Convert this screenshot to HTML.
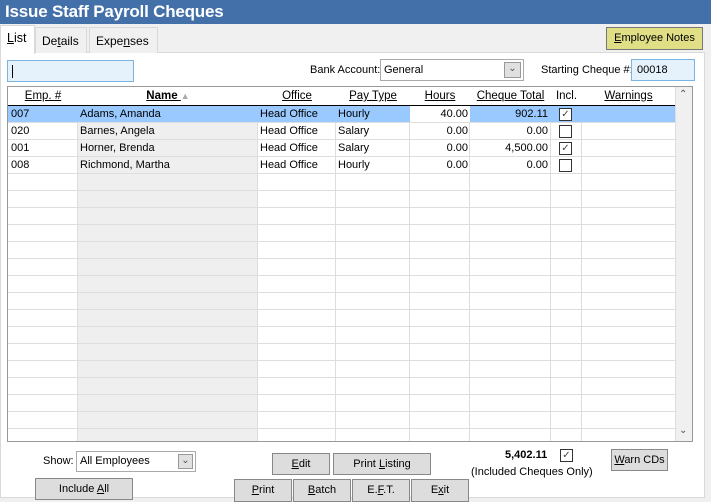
<!DOCTYPE html><html><head><style>
*{box-sizing:border-box;margin:0;padding:0}
body{width:711px;height:502px;background:#f0f0f0;font:11px "Liberation Sans",sans-serif;position:relative;overflow:hidden;color:#000}
.a{position:absolute}
.title{left:0;top:0;width:711px;height:24px;background:#4470aa;color:#fff;font-weight:bold;font-size:17px;padding:2px 5px;letter-spacing:-0.2px}
.panel{left:0;top:52px;width:705px;height:446px;background:#fff;border:1px solid #d9d9d9}
.tab{top:27px;height:26px;background:#f0f0f0;border:1px solid #d9d9d9;border-bottom:none;font-size:12px;padding:6px 6px}
.btn{background:#ddd;border:1px solid #888;text-align:center;font-size:11px;line-height:20px}
.cell{position:absolute;font-size:11px;white-space:nowrap;line-height:17px}
.cb{position:absolute;width:13px;height:13px;border:1px solid #333;background:#fff;color:#444;font-size:10px;line-height:11px;text-align:center}
.h{position:absolute;top:89px;text-align:center;text-decoration:underline;font-size:11.5px;line-height:14px}
</style></head><body>
<div class="a title">Issue Staff Payroll Cheques</div>
<div class="a panel"></div>
<div class="a tab" style="left:0;top:25px;height:29px;width:35px;background:#fff;padding:5px 6px;font-size:12.5px"><u>L</u>ist</div>
<div class="a tab" style="left:35px;width:52px">De<u>t</u>ails</div>
<div class="a tab" style="left:89px;width:69px">Expe<u>n</u>ses</div>
<div class="a" style="left:606px;top:27px;width:97px;height:23px;background:#e0df86;border:1px solid #777;font-size:11px;text-align:center;line-height:21px"><u>E</u>mployee Notes</div>
<div class="a" style="left:7px;top:60px;width:127px;height:22px;background:#e5f1fb;border:1px solid #7ab3e4"><div class="a" style="left:4px;top:4px;width:1px;height:13px;background:#000"></div></div>
<div class="a" style="left:310px;top:64px;font-size:11px">Bank Account:</div>
<div class="a" style="left:380px;top:59px;width:144px;height:22px;border:1px solid #aaa;background:#fff;font-size:11px;padding:4px 3px">General<div class="a" style="right:2px;top:2px;width:17px;height:16px;background:#e0e0e0;border:1px solid #999;text-align:center;line-height:12px;font-size:10px;color:#555">&#8964;</div></div>
<div class="a" style="left:541px;top:64px;font-size:11px">Starting Cheque #:</div>
<div class="a" style="left:631px;top:59px;width:64px;height:22px;background:#e5f1fb;border:1px solid #7ab3e4;font-size:11px;padding:4px 5px">00018</div>
<div class="a" style="left:7px;top:86px;width:686px;height:356px;border:1px solid #999;background:#fff;overflow:hidden">
 <div class="a" style="left:70px;top:0;width:180px;height:356px;background:#efefef"></div>
 <div class="a" style="left:0;top:19px;width:667px;height:338px;background:repeating-linear-gradient(to bottom,transparent 0,transparent 16px,#dedede 16px,#dedede 17px)"></div>
 <div class="a" style="left:0;top:0;width:667px;height:356px;background:linear-gradient(to right,transparent 69px,#dedede 69px,#dedede 70px,transparent 70px,transparent 249px,#dedede 249px,#dedede 250px,transparent 250px,transparent 327px,#dedede 327px,#dedede 328px,transparent 328px,transparent 401px,#dedede 401px,#dedede 402px,transparent 402px,transparent 461px,#dedede 461px,#dedede 462px,transparent 462px,transparent 542px,#dedede 542px,#dedede 543px,transparent 543px,transparent 573px,#dedede 573px,#dedede 574px,transparent 574px)"></div>
 <div class="a" style="left:0;top:0;width:667px;height:19px;background:#fff;border-bottom:1px solid #000"></div>
 <div class="a" style="left:0;top:19px;width:667px;height:16px;background:#99c9ff"></div>
 <div class="a" style="left:402px;top:19px;width:60px;height:16px;background:#fff"></div>
 <div class="a" style="left:667px;top:0;width:17px;height:356px;background:#f0f0f0;border-left:1px solid #ddd"></div>
 <div class="a" style="left:671px;top:2px;font-size:10px;color:#555">&#8963;</div>
 <div class="a" style="left:671px;top:338px;font-size:10px;color:#555">&#8964;</div>
</div>
<div class="h" style="left:8px;width:70px">Emp. #</div>
<div class="h" style="left:78px;width:180px;font-weight:bold">Name <span style="color:#aaa;font-size:9px;text-decoration:none;display:inline-block">&#9650;</span></div>
<div class="h" style="left:258px;width:78px">Office</div>
<div class="h" style="left:336px;width:74px">Pay Type</div>
<div class="h" style="left:410px;width:60px">Hours</div>
<div class="h" style="left:470px;width:81px">Cheque Total</div>
<div class="h" style="left:551px;width:31px;text-decoration:none">Incl.</div>
<div class="h" style="left:582px;width:93px">Warnings</div>
<div class="a" style="left:0;top:106px">
<div class="cell" style="left:11px;top:0">007</div><div class="cell" style="left:80px;top:0">Adams, Amanda</div><div class="cell" style="left:260px;top:0">Head Office</div><div class="cell" style="left:338px;top:0">Hourly</div><div class="cell" style="left:410px;width:58px;text-align:right;top:0">40.00</div><div class="cell" style="left:470px;width:78px;text-align:right;top:0">902.11</div>
<div class="cell" style="left:11px;top:17px">020</div><div class="cell" style="left:80px;top:17px">Barnes, Angela</div><div class="cell" style="left:260px;top:17px">Head Office</div><div class="cell" style="left:338px;top:17px">Salary</div><div class="cell" style="left:410px;width:58px;text-align:right;top:17px">0.00</div><div class="cell" style="left:470px;width:78px;text-align:right;top:17px">0.00</div>
<div class="cell" style="left:11px;top:34px">001</div><div class="cell" style="left:80px;top:34px">Horner, Brenda</div><div class="cell" style="left:260px;top:34px">Head Office</div><div class="cell" style="left:338px;top:34px">Salary</div><div class="cell" style="left:410px;width:58px;text-align:right;top:34px">0.00</div><div class="cell" style="left:470px;width:78px;text-align:right;top:34px">4,500.00</div>
<div class="cell" style="left:11px;top:51px">008</div><div class="cell" style="left:80px;top:51px">Richmond, Martha</div><div class="cell" style="left:260px;top:51px">Head Office</div><div class="cell" style="left:338px;top:51px">Hourly</div><div class="cell" style="left:410px;width:58px;text-align:right;top:51px">0.00</div><div class="cell" style="left:470px;width:78px;text-align:right;top:51px">0.00</div>
<div class="cb" style="left:559px;top:2px">&#10003;</div>
<div class="cb" style="left:559px;top:19px"></div>
<div class="cb" style="left:559px;top:36px">&#10003;</div>
<div class="cb" style="left:559px;top:53px"></div>
</div>
<div class="a" style="left:43px;top:455px;font-size:11px">Show:</div>
<div class="a" style="left:76px;top:451px;width:120px;height:21px;border:1px solid #aaa;background:#fff;font-size:11px;padding:3px 3px">All Employees<div class="a" style="right:2px;top:2px;width:15px;height:15px;background:#e0e0e0;border:1px solid #999;text-align:center;line-height:11px;font-size:10px;color:#555">&#8964;</div></div>
<div class="a btn" style="left:35px;top:478px;width:98px;height:22px">Include <u>A</u>ll</div>
<div class="a btn" style="left:272px;top:453px;width:58px;height:22px"><u>E</u>dit</div>
<div class="a btn" style="left:333px;top:453px;width:98px;height:22px">Print <u>L</u>isting</div>
<div class="a btn" style="left:234px;top:479px;width:58px;height:23px"><u>P</u>rint</div>
<div class="a btn" style="left:293px;top:479px;width:58px;height:23px"><u>B</u>atch</div>
<div class="a btn" style="left:352px;top:479px;width:58px;height:23px">E.<u>F</u>.T.</div>
<div class="a btn" style="left:411px;top:479px;width:58px;height:23px">E<u>x</u>it</div>
<div class="a" style="left:505px;top:449px;font-size:11px;font-weight:bold">5,402.11</div>
<div class="cb" style="left:560px;top:449px">&#10003;</div>
<div class="a" style="left:471px;top:466px;font-size:11px">(Included Cheques Only)</div>
<div class="a btn" style="left:611px;top:449px;width:57px;height:22px"><u>W</u>arn CDs</div>
</body></html>
